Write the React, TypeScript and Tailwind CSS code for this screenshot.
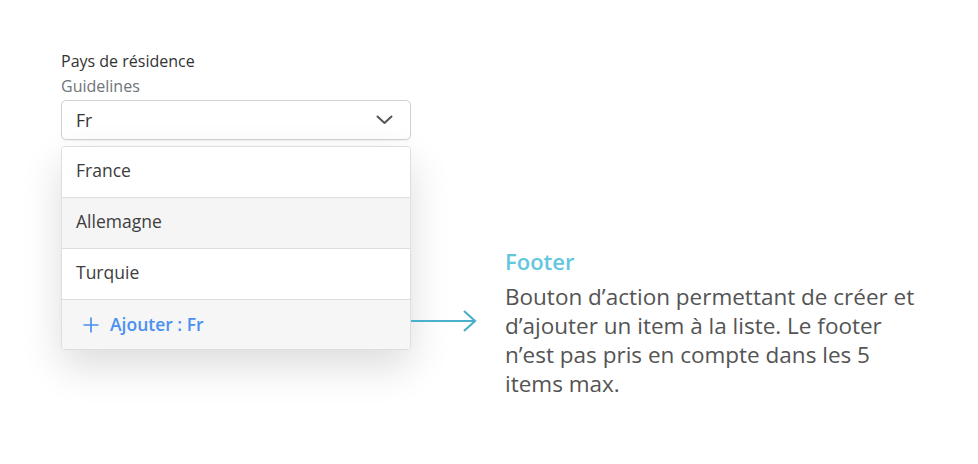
const options = ["France", "Allemagne", "Turquie"];

export default function App() {
  return (
    <div className="flex h-[464px] w-[978px] items-start bg-white pl-[61px] pt-[50px] font-['Open_Sans',sans-serif]">
      {/* Champ select */}
      <div className="w-[350px] shrink-0">
        <p className="text-[16px] leading-[22px] text-[#333]">Pays de résidence</p>
        <p className="mt-[3px] text-[16px] leading-[22px] text-[#6f747a]">Guidelines</p>
        <div className="mt-[3px] flex h-[40px] items-center justify-between rounded-[5px] border border-[#cfd2d6] bg-white pl-[14px] pr-[17px] shadow-[0_1px_2px_rgba(0,0,0,0.06)]">
          <span className="text-[17.5px] text-[#333]">Fr</span>
          <svg width="17" height="10" viewBox="0 0 17 10" fill="none">
            <path d="M1.5 1.5 L8.5 8 L15.5 1.5" stroke="#555" strokeWidth="2" strokeLinecap="round" strokeLinejoin="round" />
          </svg>
        </div>

        {/* Liste */}
        <div className="mt-[6px] overflow-hidden rounded-[4px] border border-[#dcdee1] bg-white shadow-[0_16px_40px_rgba(0,0,0,0.14)]">
          {options.map((o, i) => (
            <div
              key={o}
              className={`flex h-[51px] items-center border-b border-[#dcdee1] pb-[3px] pl-[14px] text-[17.5px] text-[#3d3d3d] ${
                i === 1 ? "bg-[#f5f5f5]" : "bg-white"
              }`}
            >
              {o}
            </div>
          ))}
          <div className="flex h-[49px] items-center gap-[11px] bg-[#f6f6f6] pl-[21px]">
            <svg width="16" height="16" viewBox="0 0 16 16" fill="none">
              <path d="M8 0.5 V15.5 M0.5 8 H15.5" stroke="#4a90f0" strokeWidth="1.7" />
            </svg>
            <span className="text-[17.5px] font-semibold text-[#4a90f0]">Ajouter : Fr</span>
          </div>
        </div>
      </div>

      {/* Annotation */}
      <div className="mt-[196px] flex items-start">
        <svg width="66" height="22" viewBox="0 0 66 22" fill="none" className="mt-[64px] shrink-0">
          <path d="M0 11 H64" stroke="#4bb0c9" strokeWidth="2.2" />
          <path d="M53 1 L64 11 L53 21" stroke="#4bb0c9" strokeWidth="2.2" />
        </svg>
        <div className="ml-[28px]">
          <p className="text-[22px] font-semibold leading-[30px] text-[#62c6de]">Footer</p>
          <p className="mt-[6px] text-[22.5px] leading-[29px] text-[#545454]">
            Bouton d’action permettant de créer et
            <br />
            d’ajouter un item à la liste. Le footer
            <br />
            n’est pas pris en compte dans les 5
            <br />
            items max.
          </p>
        </div>
      </div>
    </div>
  );
}
